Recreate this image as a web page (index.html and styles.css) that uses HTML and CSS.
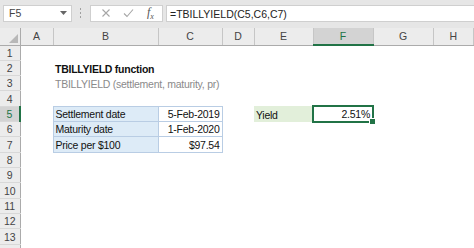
FILE: index.html
```html
<!DOCTYPE html>
<html lang="en">
<head>
    <meta charset="UTF-8">
    <title>TBILLYIELD function</title>
    <link rel="stylesheet" href="styles.css">
</head>
<body>

<!-- Barra della formula -->
<div class="formula-bar">
    <div class="namebox">
        <span>F5</span>
        <svg class="arrow" width="7" height="4" viewBox="0 0 7 4"><path d="M0 0h7L3.5 4z" fill="#666"/></svg>
    </div>
    <div class="dots"><i></i><i></i><i></i></div>
    <div class="fx-buttons">
        <svg width="10" height="10" viewBox="0 0 10 10"><path d="M1.5 1.5l7 7M8.5 1.5l-7 7" stroke="#a6a6a6" stroke-width="1.1" fill="none"/></svg>
        <svg width="11" height="10" viewBox="0 0 11 10"><path d="M1 5.5l3 3L10 1.5" stroke="#a6a6a6" stroke-width="1.1" fill="none"/></svg>
        <span class="fx">f<sub>x</sub></span>
    </div>
    <div class="formula">=TBILLYIELD(C5,C6,C7)</div>
</div>

<!-- Foglio -->
<table class="sheet">
    <colgroup>
        <col style="width:20px"><col style="width:33px"><col style="width:105px"><col style="width:64px">
        <col style="width:32px"><col style="width:59px"><col style="width:60px"><col style="width:60px"><col>
    </colgroup>
    <thead>
        <tr>
            <th class="corner"><svg width="9" height="9" viewBox="0 0 9 9"><path d="M9 0v9H0z" fill="#b8b8b8"/></svg></th>
            <th>A</th><th>B</th><th>C</th><th>D</th><th>E</th><th class="sel-col">F</th><th>G</th><th>H</th>
        </tr>
    </thead>
    <tbody>
        <tr><th>1</th><td></td><td></td><td></td><td></td><td></td><td></td><td></td><td></td></tr>
        <tr><th>2</th><td></td><td class="title">TBILLYIELD function</td><td></td><td></td><td></td><td></td><td></td><td></td></tr>
        <tr><th>3</th><td></td><td class="syntax" colspan="3">TBILLYIELD (settlement, maturity, pr)</td><td></td><td></td><td></td><td></td></tr>
        <tr><th>4</th><td></td><td></td><td></td><td></td><td></td><td></td><td></td><td></td></tr>
        <tr><th class="sel-row">5</th><td></td><td class="label">Settlement date</td><td class="value">5-Feb-2019</td><td></td><td class="yield">Yield</td><td class="active">2.51%<span class="handle"></span></td><td></td><td></td></tr>
        <tr><th>6</th><td></td><td class="label">Maturity date</td><td class="value">1-Feb-2020</td><td></td><td></td><td></td><td></td><td></td></tr>
        <tr><th>7</th><td></td><td class="label">Price per $100</td><td class="value">$97.54</td><td></td><td></td><td></td><td></td><td></td></tr>
        <tr><th>8</th><td></td><td></td><td></td><td></td><td></td><td></td><td></td><td></td></tr>
        <tr><th>9</th><td></td><td></td><td></td><td></td><td></td><td></td><td></td><td></td></tr>
        <tr><th>10</th><td></td><td></td><td></td><td></td><td></td><td></td><td></td><td></td></tr>
        <tr><th>11</th><td></td><td></td><td></td><td></td><td></td><td></td><td></td><td></td></tr>
        <tr><th>12</th><td></td><td></td><td></td><td></td><td></td><td></td><td></td><td></td></tr>
        <tr><th>13</th><td></td><td></td><td></td><td></td><td></td><td></td><td></td><td></td></tr>
        <tr><th>14</th><td></td><td></td><td></td><td></td><td></td><td></td><td></td><td></td></tr>
        <tr class="partial"><th></th><td></td><td></td><td></td><td></td><td></td><td></td><td></td><td></td></tr>
    </tbody>
</table>

</body>
</html>
```

FILE: styles.css
```css
body {
    margin: 0;
    font-family: "Liberation Sans", Arial, sans-serif;
    font-size: 10.5px;
    color: #222;
    background-color: #fff;
    overflow: hidden;
}
.formula-bar {
    display: flex;
    align-items: center;
    height: 28px;
    padding: 0 0 2px 3px;
    box-sizing: border-box;
    background-color: #e6e6e6;
}
.namebox {
    display: flex;
    align-items: center;
    justify-content: space-between;
    width: 69px;
    height: 17px;
    padding: 0 4px 0 5px;
    box-sizing: border-box;
    background-color: #fff;
    border: 1px solid #cfcfcf;
    color: #444;
}
.dots {
    display: flex;
    flex-direction: column;
    gap: 2px;
    margin: 0 9px 0 8px;
}
.dots i {
    width: 1px;
    height: 2px;
    background-color: #a0a0a0;
}
.fx-buttons {
    display: flex;
    align-items: center;
    gap: 12px;
    width: 73px;
    height: 17px;
    padding: 0 0 0 10px;
    box-sizing: border-box;
    background-color: #fff;
    border: 1px solid #cfcfcf;
}
.fx {
    margin-left: 1px;
    font-family: "Liberation Serif", serif;
    font-style: italic;
    font-size: 12px;
    color: #555;
}
.fx sub {
    font-size: 8px;
}
.formula {
    flex: 1;
    height: 17px;
    margin-left: 3px;
    padding-left: 3px;
    line-height: 17px;
    box-sizing: border-box;
    background-color: #fff;
    border: 1px solid #cfcfcf;
    border-right: none;
}
.sheet {
    width: 100%;
    table-layout: fixed;
    border-collapse: collapse;
}
.sheet thead th {
    height: 16px;
    padding: 0;
    background-color: #ececec;
    border-right: 1px solid #c6c6c6;
    border-bottom: 1px solid #ababab;
    font-weight: normal;
    color: #444;
    text-align: center;
}
.sheet thead th.corner {
    text-align: right;
    vertical-align: bottom;
    line-height: 0;
    border-right: 1px solid #ababab;
}
.corner svg {
    margin: 0 2px 2px 0;
}
.sheet thead th.sel-col {
    background-color: #d3d3d3;
    border-bottom: 2px solid #217346;
    color: #217346;
}
.sheet tbody th {
    height: 14.33px;
    padding: 0;
    background-color: #ececec;
    border-right: 1px solid #ababab;
    border-bottom: 1px solid #d8d8d8;
    font-weight: normal;
    color: #444;
    text-align: center;
}
.sheet tbody th.sel-row {
    background-color: #d3d3d3;
    border-right: 2px solid #217346;
    color: #217346;
}
td {
    padding: 0 2px;
    white-space: nowrap;
    overflow: visible;
    vertical-align: bottom;
    line-height: 13px;
    letter-spacing: -0.25px;
    color: #111;
}
.title {
    font-weight: bold;
}
.syntax {
    color: #8a8a8a;
}
.label {
    background-color: #ddebf7;
    border: 1px solid #b9cde4;
}
.value {
    text-align: right;
    border: 1px solid #b9cde4;
}
.yield {
    background-color: #e2efda;
}
.active {
    position: relative;
    text-align: right;
    border: 2px solid #217346;
}
.handle {
    position: absolute;
    right: -4px;
    bottom: -4px;
    width: 5px;
    height: 5px;
    background-color: #217346;
    border: 1px solid #fff;
}
```
